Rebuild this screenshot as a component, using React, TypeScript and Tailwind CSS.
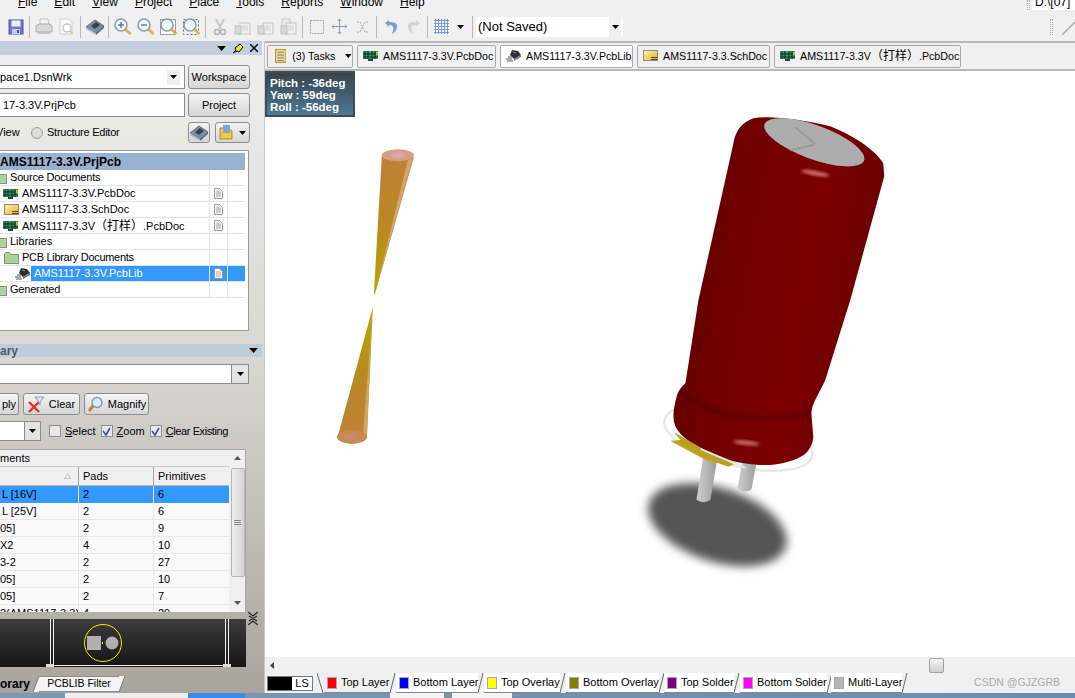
import type { ReactNode } from 'react';

// small toolbar and tree icons
function PcbIcon() {
  return (
    <svg width="16" height="12" viewBox="0 0 16 12" className="shrink-0">
      <rect x="0" y="1" width="15" height="8" fill="#3d9a6c" />
      <path d="M2 1v8M5 1v8M9 1v8M12 1v8M0 4h15M0 7h15" stroke="#0d2a20" strokeWidth="1" />
      <rect x="5" y="9" width="5" height="2" fill="#1b4a38" />
      <rect x="13" y="2" width="2" height="3" fill="#d8b030" />
    </svg>
  );
}

function ChipIcon() {
  return (
    <svg width="16" height="14" viewBox="0 0 16 14" className="shrink-0">
      <path d="M6 1l6 1 3 4-7 4-4-4z" fill="#303030" />
      <path d="M8 10l7-4v2l-7 4z" fill="#777" />
      <path d="M0 10h6M1 12h6M2 8h4" stroke="#555" strokeWidth="1" />
      <path d="M7 3l3 1" stroke="#888" />
    </svg>
  );
}

function SchIcon() {
  return (
    <svg width="16" height="12" viewBox="0 0 16 12" className="shrink-0">
      <defs>
        <linearGradient id="sch" x1="0" y1="0" x2="1" y2="1">
          <stop offset="0" stopColor="#fff3b0" />
          <stop offset="1" stopColor="#e8b020" />
        </linearGradient>
      </defs>
      <rect x="0.5" y="0.5" width="14" height="10" fill="url(#sch)" stroke="#8a8a8a" />
      <path d="M8 7.5h6M8 9.5h6" stroke="#5a4a10" />
    </svg>
  );
}

function DocIcon({ light }: { light?: boolean }) {
  return (
    <svg width="9" height="11" viewBox="0 0 9 11">
      <path d="M.5.5h5l3 3v7h-8z" fill={light ? '#fff' : '#f4f4f4'} stroke="#9a9a9a" />
      <path d="M2 4h5M2 6h5M2 8h5" stroke="#a8a8a8" />
    </svg>
  );
}

function FolderIcon({ clip }: { clip?: boolean }) {
  return (
    <svg width="15" height="12" viewBox="0 0 15 12" className={clip ? 'shrink-0 -ml-[8px]' : 'shrink-0'}>
      <path d="M.5 2.5l1-2h4l1 2h8v9h-14z" fill="#b4d8a4" stroke="#7f8f7a" />
      <rect x="1.5" y="3.5" width="12" height="7" fill="#a8d098" />
    </svg>
  );
}

function Magnifier({ mark }: { mark?: 'plus' | 'minus' | 'page' | 'dash' }) {
  return (
    <svg width="20" height="20" viewBox="0 0 20 20">
      {mark === 'page' && <rect x="1.5" y="2.5" width="15" height="15" fill="#fff" stroke="#a0a0a0" />}
      {mark === 'dash' && <rect x="1.5" y="2.5" width="15" height="15" fill="none" stroke="#6a6a6a" strokeDasharray="2 2" />}
      <circle cx="8" cy="8" r="6" fill="#eef4f8" stroke="#8a9aa4" strokeWidth="1.5" />
      <path d="M12.5 12.5l5 4.5" stroke="#d8b060" strokeWidth="3" />
      {mark === 'plus' && <path d="M5 8h6M8 5v6" stroke="#5a7a98" strokeWidth="1.4" />}
      {mark === 'minus' && <path d="M5 8h6" stroke="#5a7a98" strokeWidth="1.4" />}
    </svg>
  );
}

function SaveIcon() {
  return (
    <svg width="16" height="16" viewBox="0 0 16 16">
      <rect x="1" y="1" width="14" height="14" fill="#6d78cc" stroke="#4d569c" />
      <rect x="3.5" y="1.5" width="9" height="6" fill="#f0f0f8" />
      <rect x="4" y="10" width="8" height="5" fill="#c8cce8" />
      <rect x="9" y="11" width="2" height="3" fill="#4d569c" />
    </svg>
  );
}

function PrinterIcon() {
  return (
    <svg width="18" height="18" viewBox="0 0 18 18">
      <path d="M5 1h8l1 6H5z" fill="#f4f4f4" stroke="#c0c0c0" />
      <path d="M1 8l3-2h11l2 2v6H1z" fill="#d8d8d8" stroke="#a8a8a8" />
      <path d="M3 14h12v2H3z" fill="#c4c4c4" />
    </svg>
  );
}

function PreviewIcon() {
  return (
    <svg width="18" height="18" viewBox="0 0 18 18">
      <path d="M2 1h9l3 3v12H2z" fill="#f8f8f8" stroke="#cfcfcf" />
      <circle cx="9" cy="10" r="4" fill="#fff" stroke="#c4c4c4" strokeWidth="1.4" />
      <path d="M12 13l3 3" stroke="#d8cca8" strokeWidth="2" />
    </svg>
  );
}

function BoardIcon() {
  return (
    <svg width="20" height="18" viewBox="0 0 20 18">
      <path d="M1 9l9-7 9 6-8 7z" fill="#7c8fa6" stroke="#5a6b80" />
      <path d="M6 8l5-4 4 3-5 4z" fill="#3a4048" />
      <path d="M1 9l10 6v2L1 11z" fill="#a8b8c8" />
      <path d="M11 15l8-7v2l-8 7z" fill="#5d6e84" />
    </svg>
  );
}

function GreyPage({ double }: { double?: boolean }) {
  return (
    <svg width="18" height="18" viewBox="0 0 18 18">
      {double && <rect x="2" y="1" width="8" height="10" fill="#ececec" stroke="#c8c8c8" />}
      <rect x="6" y="5" width="10" height="11" fill="#f2f2f2" stroke="#c4c4c4" />
      <path d="M8 8h6M8 10h6M8 12h6" stroke="#d0d0d0" />
      <rect x="1" y="8" width="6" height="8" fill="#d8d8d4" stroke="#c0c0c0" />
    </svg>
  );
}

function CutIcon() {
  return (
    <svg width="14" height="18" viewBox="0 0 14 18">
      <path d="M3 1l5 10M11 1L6 11" stroke="#c8c8c8" strokeWidth="2" />
      <circle cx="4" cy="14" r="2.5" fill="none" stroke="#b4b4b4" strokeWidth="1.5" />
      <circle cx="10" cy="14" r="2.5" fill="none" stroke="#b4b4b4" strokeWidth="1.5" />
    </svg>
  );
}

function SelectIcon() {
  return (
    <svg width="16" height="16" viewBox="0 0 16 16">
      <rect x="1.5" y="1.5" width="13" height="13" fill="none" stroke="#a0a0a0" strokeDasharray="2 1" />
    </svg>
  );
}

function MoveIcon() {
  return (
    <svg width="15" height="15" viewBox="0 0 15 15">
      <path d="M7.5 0v15M0 7.5h15M5.5 2l2-2 2 2M5.5 13l2 2 2-2M2 5.5l-2 2 2 2M13 5.5l2 2-2 2" fill="none" stroke="#8c98a4" />
    </svg>
  );
}

function CrossDotsIcon() {
  return (
    <svg width="15" height="14" viewBox="0 0 15 14">
      <path d="M2 2h3l5 10h3M2 12h3l5-10h3" fill="none" stroke="#a8a8a8" strokeDasharray="2 1" />
    </svg>
  );
}

function UndoIcon({ redo }: { redo?: boolean }) {
  return (
    <svg width="14" height="16" viewBox="0 0 14 16" className={redo ? '-scale-x-100' : ''}>
      <path d="M5 1L1 4l4 4V6c4 0 5 2 4 6l-1 3c4-2 5-5 5-8s-3-4-8-4z" fill={redo ? '#d4d4d4' : '#7a9cd0'} />
    </svg>
  );
}

function GridIcon() {
  return (
    <svg width="15" height="15" viewBox="0 0 15 15">
      <path d="M0 1.5h15M0 4.5h15M0 7.5h15M0 10.5h15M0 13.5h15M1.5 0v15M4.5 0v15M7.5 0v15M10.5 0v15M13.5 0v15" stroke="#7d9ad8" />
    </svg>
  );
}

function Caret({ className = '' }: { className?: string }) {
  return (
    <svg width="7" height="4" viewBox="0 0 7 4" className={className}>
      <path d="M0 0h7L3.5 4z" fill="#000" />
    </svg>
  );
}

function Sep() {
  return <div className="w-px h-[22px] mx-[2px] bg-[#b8b8b8] shrink-0" />;
}

function Tool({ children }: { children: ReactNode }) {
  return <div className="w-[23px] h-[22px] flex items-center justify-center shrink-0">{children}</div>;
}

function Button({ children, className = '' }: { children: ReactNode; className?: string }) {
  return (
    <div className={`flex items-center justify-center gap-1 rounded-[3px] border border-[#8c8c8c] bg-gradient-to-b from-[#f4f4f4] to-[#d6d6d6] ${className}`}>
      {children}
    </div>
  );
}

function Check({ label, on, underline, className = '' }: { label: string; on?: boolean; underline: string; className?: string }) {
  return (
    <div className="flex items-center gap-[4px]">
      <div className="w-[12px] h-[12px] border border-[#8f8f8f] bg-[#e8e8e8] flex items-center justify-center">
        {on && (
          <svg width="9" height="9" viewBox="0 0 9 9">
            <path d="M1 4l3 4 4-7" fill="none" stroke="#3a4ea0" strokeWidth="1.6" />
          </svg>
        )}
      </div>
      <span className={className}>
        <u>{underline}</u>
        {label}
      </span>
    </div>
  );
}

const menus = ['File', 'Edit', 'View', 'Project', 'Place', 'Tools', 'Reports', 'Window', 'Help'];

function TreeRow({ children, doc, selected }: { children: ReactNode; doc?: boolean; selected?: boolean }) {
  return (
    <div className="flex h-[16px] w-[245px] border-b border-[#e4e4e4] items-center">
      <div className="flex items-center w-[209px] h-full whitespace-nowrap">{children}</div>
      <div className={`w-[18px] h-full flex items-center justify-center border-l border-[#e4e4e4] ${selected ? 'bg-[#3399ff] border-[#3399ff]' : ''}`}>
        {doc && <DocIcon light={selected} />}
      </div>
      <div className={`w-[18px] h-full border-l border-[#e4e4e4] ${selected ? 'bg-[#3399ff] border-[#3399ff]' : ''}`} />
    </div>
  );
}

const rows = [
  ['L [16V]', '2', '6'],
  ['L [25V]', '2', '6'],
  ['05]', '2', '9'],
  ['X2', '4', '10'],
  ['3-2', '2', '27'],
  ['05]', '2', '10'],
  ['05]', '2', '7'],
  ['2(AMS1117-3.3)', '4', '29'],
];

function LeftPanel() {
  return (
    <div className="w-[264px] h-full shrink-0 bg-gradient-to-b from-[#f0f0f0] via-[#d8d6d2] to-[#a8a59d] overflow-hidden">
      <div className="h-[14px] w-[262px] bg-[#c2d0de] flex items-center justify-end gap-[6px] pr-[4px]">
        <Caret className="w-[9px] h-[5px]" />
        <svg width="12" height="11" viewBox="0 0 12 11">
          <path d="M1 10l3-3-1-2 5-4 3 3-4 5-2-1z" fill="#f0e050" stroke="#000" />
        </svg>
        <svg width="8" height="8" viewBox="0 0 8 8">
          <path d="M0 0l8 8M8 0L0 8" stroke="#000" strokeWidth="1.4" />
        </svg>
      </div>

      <div className="mt-[10px] flex gap-[3px] h-[24px]">
        <div className="w-[185px] bg-white border border-[#8c8c8c] border-l-0 flex items-center justify-between pr-[4px]">
          <span>pace1.DsnWrk</span>
          <div className="w-[13px] h-[15px] bg-[#f0f0f0] flex items-center justify-center"><Caret /></div>
        </div>
        <Button className="w-[62px]">Workspace</Button>
      </div>
      <div className="mt-[4px] flex gap-[3px] h-[24px]">
        <div className="w-[185px] bg-white border border-[#8c8c8c] border-l-0 flex items-center pl-[3px]">17-3.3V.PrjPcb</div>
        <Button className="w-[62px]">Project</Button>
      </div>
      <div className="mt-[5px] flex items-center h-[21px]">
        <span className="w-[31px] -ml-[4px] shrink-0 pr-[-4px]">View</span>
        <div className="ml-[4px] w-[12px] h-[12px] rounded-full border border-[#9a9a9a] bg-[#dcdcdc]" />
        <span className="ml-[4px] w-[141px] tracking-[-0.25px]">Structure Editor</span>
        <Button className="w-[22px] h-[21px]"><BoardIcon /></Button>
        <Button className="ml-[5px] w-[35px] h-[21px]">
          <svg width="16" height="15" viewBox="0 0 16 15">
            <path d="M1 3h8l4 3v8H1z" fill="#f0c850" stroke="#b08a20" />
            <path d="M4 0h7v8H4z" fill="#7ea4dc" />
          </svg>
          <Caret />
        </Button>
      </div>

      <div className="mt-[7px] w-[249px] h-[181px] bg-white border-t border-r border-b border-[#9a9a9a] pt-[2px]">
        <div className="h-[17px] w-[245px] bg-[#98b2d0] font-bold text-[12px] flex items-center whitespace-nowrap">AMS1117-3.3V.PrjPcb</div>
        <TreeRow><FolderIcon clip /><span className="ml-[3px] tracking-[-0.2px]">Source Documents</span></TreeRow>
        <TreeRow doc><span className="ml-[3px] flex"><PcbIcon /></span><span className="ml-[3px]">AMS1117-3.3V.PcbDoc</span></TreeRow>
        <TreeRow doc><span className="ml-[4px] flex"><SchIcon /></span><span className="ml-[2px]">AMS1117-3.3.SchDoc</span></TreeRow>
        <TreeRow doc><span className="ml-[3px] flex"><PcbIcon /></span><span className="ml-[3px]">AMS1117-3.3V<span className="text-[12px]">（打样）</span>.PcbDoc</span></TreeRow>
        <TreeRow><FolderIcon clip /><span className="ml-[3px]">Libraries</span></TreeRow>
        <TreeRow><span className="ml-[4px] flex"><FolderIcon /></span><span className="ml-[3px] tracking-[-0.3px]">PCB Library Documents</span></TreeRow>
        <TreeRow doc selected>
          <span className="ml-[15px] flex"><ChipIcon /></span>
          <span className="bg-[#3399ff] text-white h-full flex-1 flex items-center pl-[3px]">AMS1117-3.3V.PcbLib</span>
        </TreeRow>
        <TreeRow><FolderIcon clip /><span className="ml-[3px] tracking-[-0.2px]">Generated</span></TreeRow>
      </div>

      <div className="mt-[13px] h-[13px] w-[262px] bg-[#bccddc] flex items-center justify-between pr-[4px] font-bold text-[#4a5a6a] text-[12px]">
        <span>ary</span>
        <Caret className="w-[9px] h-[5px]" />
      </div>
      <div className="mt-[7px] h-[20px] w-[249px] bg-white border border-[#8c8c8c] border-l-0 flex justify-end">
        <div className="w-[17px] bg-[#e4e4e4] border-l border-[#8c8c8c] flex items-center justify-center"><Caret /></div>
      </div>
      <div className="mt-[9px] h-[22px] flex gap-[4px]">
        <Button className="w-[19px] border-l-0 rounded-l-none">ply</Button>
        <Button className="w-[57px]">
          <svg width="17" height="17" viewBox="0 0 17 17">
            <path d="M1 6l10 10M11 6L1 16" stroke="#e03020" strokeWidth="2.4" />
            <path d="M7 1h9l-4 5v3l-1-1V6z" fill="#dfe8f0" stroke="#8a9aa8" />
          </svg>
          Clear
        </Button>
        <Button className="w-[65px]">
          <svg width="17" height="17" viewBox="0 0 17 17">
            <circle cx="10" cy="6.5" r="5" fill="#dfeaf8" stroke="#8496a8" strokeWidth="1.4" />
            <path d="M6 10l-4 5" stroke="#b88a30" strokeWidth="3" />
          </svg>
          Magnify
        </Button>
      </div>
      <div className="mt-[6px] h-[20px] flex items-center">
        <div className="w-[41px] h-[20px] bg-white border border-[#8c8c8c] border-l-0 flex justify-end">
          <div className="w-[16px] bg-[#e4e4e4] border-l border-[#8c8c8c] flex items-center justify-center"><Caret /></div>
        </div>
        <div className="ml-[8px] flex gap-[5px] whitespace-nowrap">
          <Check underline="S" label="elect" />
          <Check underline="Z" label="oom" on />
          <Check underline="C" label="lear Existing" on className="tracking-[-0.4px]" />
        </div>
      </div>

      <div className="flex mt-[8px]">
        <div className="w-[246px] shrink-0">
          <div className="h-[163px] flex border-t border-r border-[#a8a8a8] overflow-hidden bg-[#f9f9f9]">
            <div className="w-[229px] shrink-0">
              <div className="h-[17px] bg-[#f0f0f0] border-b border-[#c8c8c8] flex items-center">ments</div>
              <div className="h-[19px] grid grid-cols-[79px_75px_75px] bg-[#f0f0f0] border-b border-[#b4b4b4]">
                <div className="border-r border-[#a0a0a0] flex items-center justify-end pr-[7px]">
                  <svg width="7" height="6" viewBox="0 0 7 6"><path d="M.5 5.5h6l-3-5z" fill="none" stroke="#c0c0c0" /></svg>
                </div>
                <div className="border-r border-[#a0a0a0] flex items-center pl-[4px]">Pads</div>
                <div className="flex items-center pl-[4px]">Primitives</div>
              </div>
              {rows.map((r, i) => (
                <div key={i} className={`h-[17px] grid grid-cols-[79px_75px_75px] border-b ${i === 0 ? 'bg-[#3399ff] border-[#3399ff]' : 'border-[#e6e6e6]'}`}>
                  <div className={`border-r border-[#e6e6e6] flex items-center whitespace-nowrap overflow-hidden ${i < 2 ? 'pl-[2px]' : ''}`}>{r[0]}</div>
                  <div className="border-r border-[#e6e6e6] pl-[4px] flex items-center">{r[1]}</div>
                  <div className="pl-[4px] flex items-center">{r[2]}</div>
                </div>
              ))}
            </div>
            <div className="flex-1 flex flex-col items-center bg-[#f0f0f0] pt-[6px] pl-[1px]">
              <svg width="7" height="4" viewBox="0 0 7 4"><path d="M0 4h7L3.5 0z" fill="#555" /></svg>
              <div className="mt-[8px] w-[14px] h-[109px] border border-[#b4b4b4] rounded-[2px] bg-gradient-to-r from-[#f0f0f0] to-[#d4d4d4] flex flex-col items-center justify-center gap-[1px]">
                <div className="w-[7px] h-px bg-[#888]" />
                <div className="w-[7px] h-px bg-[#888]" />
                <div className="w-[7px] h-px bg-[#888]" />
              </div>
              <svg className="mt-[24px]" width="7" height="4" viewBox="0 0 7 4"><path d="M0 0h7L3.5 4z" fill="#555" /></svg>
            </div>
          </div>
          <div className="mt-[7px] h-[48px] bg-gradient-to-b from-[#3c3c3c] to-[#161616]">
            <svg width="246" height="48" viewBox="0 619 246 48" className="block">
              <path d="M50.5 619v46M53.5 619v46M225.5 619v46M228.5 619v46M53 665.5h172" stroke="#f0f0f0" fill="none" />
              <rect x="46" y="664" width="8" height="3" fill="#ddd" />
              <rect x="223" y="664" width="8" height="3" fill="#ddd" />
              <circle cx="103" cy="643" r="18.5" fill="none" stroke="#f0f000" />
              <rect x="87" y="636" width="14" height="14" fill="#b0b0b0" />
              <circle cx="112" cy="643" r="6.5" fill="#b0b0b0" />
              <path d="M102 643h1" stroke="#f0f000" strokeWidth="2" />
            </svg>
          </div>
        </div>
        <div className="pl-[2px] pt-[163px]">
          <svg width="10" height="13" viewBox="0 0 10 13">
            <path d="M0 0l5 4 5-4M0 13l5-4 5 4M1 4l8 5M9 4L1 9" stroke="#222" fill="none" strokeWidth="1.2" />
          </svg>
        </div>
      </div>

      <div className="mt-[8px] h-[18px] flex items-center">
        <span className="font-bold text-[12px] w-[33px]">orary</span>
        <div className="flex items-center h-[16px]">
          <svg width="6" height="16" viewBox="0 0 6 16"><path d="M0 16L6 0h1v16z" fill="#f4f4f4" /><path d="M0 16L6 0" stroke="#777" /></svg>
          <div className="h-[16px] w-[80px] bg-[#f4f4f4] border-t border-b border-[#8c8c8c] flex items-center justify-center text-[10.5px]">PCBLIB Filter</div>
          <svg width="6" height="16" viewBox="0 0 6 16"><path d="M0 0h6L0 16z" fill="#f4f4f4" /><path d="M6 0L0 16" stroke="#777" /></svg>
        </div>
      </div>
    </div>
  );
}

function DocTab({ icon, children, active, className = '' }: { icon: ReactNode; children: ReactNode; active?: boolean; className?: string }) {
  return (
    <div className={`h-[23px] shrink-0 flex items-center gap-[4px] pl-[5px] border border-[#a8a8a8] rounded-[2px] whitespace-nowrap text-[10.7px] ${active ? 'bg-white' : 'bg-[#f0f0f0]'} ${className}`}>
      {icon}
      {children}
    </div>
  );
}

const layers = [
  { name: 'Top Layer', color: '#ff0000', w: 72, active: true },
  { name: 'Bottom Layer', color: '#0000ff', w: 88 },
  { name: 'Top Overlay', color: '#ffff00', w: 82 },
  { name: 'Bottom Overlay', color: '#808000', w: 98 },
  { name: 'Top Solder', color: '#800080', w: 76 },
  { name: 'Bottom Solder', color: '#ff00ff', w: 91 },
  { name: 'Multi-Layer', color: '#b4b4b4', w: 74 },
];

const capBody =
  'M733 143 C735 130 742 122 753 118 C770 115 800 119 830 126 C855 136 875 150 883 163 L884 176 L850 300 L825 380 C818 395 811 405 811 413 L813 437 C812 448 806 454 800 457 C790 462 775 466 760 465 C735 464 712 456 697 447 C683 438 673 430 673 417 C673 408 675 402 676 397 C678 390 682 386 685 383 L698 300 Z';

function Scene() {
  return (
    <svg viewBox="264 71 811 586" className="w-full h-full block">
      <defs>
        <filter id="soft"><feGaussianBlur stdDeviation="5" /></filter>
        <filter id="glint"><feGaussianBlur stdDeviation="1.6" /></filter>
        <clipPath id="capClip"><path d={capBody} /></clipPath>
        <linearGradient id="body" x1="0" y1="0" x2="1" y2="0.28">
          <stop offset="0" stopColor="#520000" />
          <stop offset="0.35" stopColor="#700000" />
          <stop offset="0.7" stopColor="#7c0000" />
          <stop offset="1" stopColor="#6a0000" />
        </linearGradient>
        <linearGradient id="coneTop" x1="0" y1="0" x2="0" y2="1">
          <stop offset="0" stopColor="#c08038" />
          <stop offset="0.55" stopColor="#b88a20" />
          <stop offset="1" stopColor="#b8a800" />
        </linearGradient>
        <linearGradient id="coneBottom" x1="0" y1="0" x2="0" y2="1">
          <stop offset="0" stopColor="#b8a800" />
          <stop offset="0.5" stopColor="#b88a20" />
          <stop offset="1" stopColor="#c08038" />
        </linearGradient>
        <linearGradient id="pin" x1="0" y1="0" x2="1" y2="0">
          <stop offset="0" stopColor="#cfcfcf" />
          <stop offset="1" stopColor="#9c9c9c" />
        </linearGradient>
      </defs>

      <path d="M413 157L374 294L373 294L381 155z" fill="url(#coneTop)" />
      <path d="M412 158L374 294L407 160z" fill="#d6a468" />
      <ellipse cx="397" cy="155" rx="16" ry="6" fill="#d8a080" />
      <ellipse cx="397" cy="155" rx="7" ry="3" fill="#e0a8c8" opacity="0.7" />
      <path d="M372 307L366 438L337 436z" fill="url(#coneBottom)" />
      <path d="M371 320L366 438L362 438z" fill="#cfa860" />
      <ellipse cx="351" cy="437" rx="15" ry="7" fill="#c88a50" />
      <ellipse cx="350" cy="437" rx="7" ry="3" fill="#c88878" />

      <ellipse cx="717" cy="525" rx="72" ry="37" transform="rotate(18 717 525)" fill="#555" filter="url(#soft)" />
      <ellipse cx="738" cy="438" rx="76" ry="28" transform="rotate(14 738 438)" fill="none" stroke="#e8e8e8" strokeWidth="2.5" />
      <path d="M703 455L717 458L710 500Q703 505 696 500z" fill="url(#pin)" />
      <path d="M743 455L757 458L751 490Q744 494 737 489z" fill="url(#pin)" />

      <path d={capBody} fill="url(#body)" />
      <g clipPath="url(#capClip)">
        <path d="M679 388C710 420 770 428 822 408" fill="none" stroke="#5a0000" strokeWidth="6" opacity="0.6" filter="url(#glint)" />
      </g>
      <ellipse cx="746" cy="443" rx="13" ry="2.6" transform="rotate(6 746 443)" fill="#c06060" filter="url(#glint)" />
      <ellipse cx="815" cy="173" rx="14" ry="2.4" transform="rotate(10 815 173)" fill="#c87070" filter="url(#glint)" />

      <ellipse cx="814" cy="142" rx="53" ry="17" transform="rotate(20 814 142)" fill="#adadad" />
      <path d="M795 127L815 144M815 144L790 150" stroke="#9a9a9a" strokeWidth="2" />

      <path d="M673 432L708 452L736 463L728 467L703 458L671 441L680 440z" fill="#b8a020" />
      <path d="M671 441L712 463" stroke="#c4aa28" strokeWidth="1.5" />
      <path d="M700 449L745 468" stroke="#e8e8e8" strokeWidth="2" />
    </svg>
  );
}

export default function App() {
  return (
    <div className="w-[1075px] h-[698px] flex flex-col overflow-hidden bg-[#f0f0f0] text-[11px] text-black font-['Liberation_Sans','Noto_Sans_CJK_SC',sans-serif]">
      <div className="h-[10px] overflow-hidden flex gap-[17px] text-[12px] whitespace-nowrap">
        {['', ...menus].map((m, i) => (
          <span key={i} className={`-mt-[6px] leading-[16px] ${i === 0 ? 'w-px' : ''}`}>
            <u>{m.charAt(0)}</u>
            {m.slice(1)}
          </span>
        ))}
        <div className="ml-auto flex gap-[2px]">
          <div className="w-[3px] h-[10px] border-x border-dotted border-[#aaa]" />
          <div className="w-[43px] h-[11px] bg-white text-[12px] -mt-[6px] h-[17px] leading-[16px] pl-[3px] overflow-hidden">D:\[07]</div>
        </div>
      </div>

      <div className="h-[31px] flex items-center pl-[4px] pt-[2px]">
        <Tool><SaveIcon /></Tool>
        <Sep />
        <Tool><PrinterIcon /></Tool>
        <Tool><PreviewIcon /></Tool>
        <Sep />
        <Tool><BoardIcon /></Tool>
        <Sep />
        <Tool><Magnifier mark="plus" /></Tool>
        <Tool><Magnifier mark="minus" /></Tool>
        <Tool><Magnifier mark="page" /></Tool>
        <Tool><Magnifier mark="dash" /></Tool>
        <Sep />
        <Tool><CutIcon /></Tool>
        <Tool><GreyPage /></Tool>
        <Tool><GreyPage /></Tool>
        <Tool><GreyPage double /></Tool>
        <Sep />
        <Tool><SelectIcon /></Tool>
        <Tool><MoveIcon /></Tool>
        <Tool><CrossDotsIcon /></Tool>
        <Sep />
        <Tool><UndoIcon /></Tool>
        <Tool><UndoIcon redo /></Tool>
        <Sep />
        <Tool><GridIcon /></Tool>
        <div className="ml-[2px] w-[10px] flex justify-center"><Caret /></div>
        <div className="ml-[5px]"><Sep /></div>
        <div className="ml-[1px] w-[147px] h-[20px] bg-white text-[13px] flex items-center justify-between pl-[2px] pr-[2px]">
          <span>(Not Saved)</span>
          <div className="w-[12px] h-full bg-[#f0f0f0] flex items-center justify-center"><Caret /></div>
        </div>
        <div className="ml-auto flex items-center gap-[9px]">
          <div className="w-[3px] h-[16px] border-x border-dotted border-[#aaa]" />
          <svg width="13" height="18" viewBox="0 0 13 18"><path d="M0 17L13 4" stroke="#a8a8a8" strokeWidth="1.5" /></svg>
        </div>
      </div>

      <div className="h-[652px] flex">
        <LeftPanel />
        <div className="flex-1 min-w-0 flex flex-col border-l border-[#c8c8c8]">
          <div className="h-[30px] flex items-center pl-[2px] gap-[4px] border-t-2 border-b-2 border-[#b8b8b8] bg-[#f0f0f0]">
            <DocTab
              className="w-[86px] pl-[7px]"
              icon={
                <svg width="12" height="16" viewBox="0 0 12 16">
                  <rect x="0.5" y="1" width="11" height="14" fill="#f4d890" stroke="#c09020" />
                  <path d="M2.5 4h7M2.5 7h7M2.5 10h7M2.5 13h7" stroke="#5a78b0" />
                </svg>
              }
            >
              <span className="ml-[2px]">(3) Tasks</span>
              <Caret className="ml-[6px]" />
            </DocTab>
            <DocTab className="w-[139px]" icon={<PcbIcon />}>AMS1117-3.3V.PcbDoc</DocTab>
            <DocTab className="w-[133px]" icon={<ChipIcon />} active>AMS1117-3.3V.PcbLib</DocTab>
            <DocTab className="w-[133px]" icon={<SchIcon />}>AMS1117-3.3.SchDoc</DocTab>
            <DocTab className="w-[187px]" icon={<PcbIcon />}>
              <span>AMS1117-3.3V<span className="text-[12px]">（打样）</span>.PcbDoc</span>
            </DocTab>
          </div>

          <div className="flex-1 min-h-0 bg-white relative">
            <Scene />
            <div className="absolute left-0 top-0 w-[90px] h-[46px] border-[2px] border-[#444c52] bg-gradient-to-b from-[#37444f] to-[#4c7a96] text-white font-bold text-[11.5px] leading-[12px] pl-[3px] pt-[4px] whitespace-nowrap">
              <div>Pitch : -36deg</div>
              <div>Yaw : 59deg</div>
              <div>Roll : -56deg</div>
            </div>
          </div>

          <div className="h-[16px] shrink-0 bg-[#f0f0f0] flex items-center pl-[5px] pr-[131px] justify-between">
            <svg width="4" height="7" viewBox="0 0 4 7"><path d="M4 0v7L0 3.5z" fill="#444" /></svg>
            <div className="w-[15px] h-[15px] rounded-[2px] border border-[#a0a0a0] bg-gradient-to-b from-[#f4f4f4] to-[#d0d0d0]" />
          </div>

          <div className="h-[20px] shrink-0 bg-[#f0f0f0] flex items-center pl-[2px]">
            <div className="w-[46px] h-[15px] border border-[#777] flex shrink-0">
              <div className="w-[24px] bg-black" />
              <div className="flex-1 bg-white flex items-center justify-center">LS</div>
            </div>
            <svg width="7" height="20" viewBox="0 0 7 20" className="shrink-0 ml-[4px]"><path d="M0 0l6 20" stroke="#666" /></svg>
            {layers.map((l) => (
              <div key={l.name} className="flex items-center shrink-0 h-[20px]" style={{ width: l.w }}>
                <div className={`h-full flex-1 flex items-center gap-[4px] pl-[3px] whitespace-nowrap border-b border-[#888] ${l.active ? 'bg-[#f0f0f0]' : 'bg-white'}`}>
                  <div className="w-[10px] h-[12px] border border-[#aaa] shrink-0" style={{ backgroundColor: l.color }} />
                  <span>{l.name}</span>
                </div>
                <svg width="6" height="20" viewBox="0 0 6 20" className="shrink-0"><path d="M0 20L5 0" stroke="#666" /></svg>
              </div>
            ))}
            <div className="ml-auto pr-[15px] text-[#aaaaaa] text-[10.5px] whitespace-nowrap">CSDN @GJZGRB</div>
          </div>
        </div>
      </div>

      <div className="h-[5px] shrink-0 flex bg-gradient-to-r from-[#7c98b4] to-[#6a8cb0]">
        <div className="ml-[65px] w-[123px] bg-[#eeeeee]" />
        <div className="w-[57px] bg-[#3a8ae8]" />
        <div className="ml-[145px] w-[54px] bg-[#f4f4f4]" />
        <div className="ml-[8px] w-[60px] bg-[#f4f4f4]" />
      </div>
    </div>
  );
}
